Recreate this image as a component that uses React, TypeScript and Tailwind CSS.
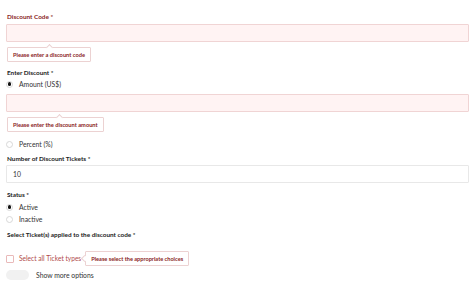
import React from "react";

const maroon = "text-[#8a2424]";

function Tip({ text, arrowLeft }: { text: string; arrowLeft: number }) {
  return (
    <div className="relative flex border border-[#ecd2d2] bg-white px-[5px] h-[15px] items-center rounded-[1px]">
      <span
        className="absolute top-[-3px] w-[5px] h-[5px] rotate-45 bg-white border-l border-t border-[#ecd2d2]"
        style={{ left: arrowLeft }}
      />
      <span className={`text-[5.7px] font-bold ${maroon} leading-none`}>{text}</span>
    </div>
  );
}

function Radio({ checked, label }: { checked?: boolean; label: string }) {
  return (
    <div className="flex items-center h-[12px]">
      <span className="w-[7px] h-[7px] rounded-full border border-[#d8d8d8] bg-white flex items-center justify-center">
        {checked && <span className="w-[3.5px] h-[3.5px] rounded-full bg-[#111]" />}
      </span>
      <span className="ml-[6px] text-[6.8px] text-[#333] leading-none">{label}</span>
    </div>
  );
}

function Label({ children, red }: { children: React.ReactNode; red?: boolean }) {
  return (
    <div className={`flex items-center h-[8px] ml-[1px] text-[6.4px] font-bold leading-none ${red ? maroon : "text-[#222]"}`}>
      {children}
    </div>
  );
}

export default function App() {
  return (
    <div
      className="w-[474px] h-[287px] bg-white pl-[6px] pr-[5px] pt-[13px] overflow-hidden flex flex-col"
      style={{ fontFamily: "Lato, 'Open Sans', sans-serif" }}
    >
      <Label red>Discount Code *</Label>
      <div className="mt-[3px] h-[18px] shrink-0 border border-[#f0d4d4] bg-[#fff3f3] rounded-[1px]" />
      <div className="mt-[5px] ml-[1px] flex">
        <Tip text="Please enter a discount code" arrowLeft={39} />
      </div>

      <div className="mt-[7px]">
        <Label>Enter Discount *</Label>
      </div>
      <div className="mt-[1px]">
        <Radio checked label="Amount (US$)" />
      </div>
      <div className="mt-[4px] h-[18px] shrink-0 border border-[#f0d4d4] bg-[#fff3f3] rounded-[1px]" />
      <div className="mt-[5px] ml-[1px] flex">
        <Tip text="Please enter the discount amount" arrowLeft={49} />
      </div>
      <div className="mt-[6px]">
        <Radio label="Percent (%)" />
      </div>

      <div className="mt-[5px]">
        <Label>Number of Discount Tickets *</Label>
      </div>
      <div className="mt-[2px] h-[18px] shrink-0 border border-[#e8e8e8] bg-white rounded-[1px] flex items-center pl-[6px]">
        <span className="text-[6.8px] text-[#333] leading-none">10</span>
      </div>

      <div className="mt-[8px]">
        <Label>Status *</Label>
      </div>
      <div className="mt-[2px]">
        <Radio checked label="Active" />
        <Radio label="Inactive" />
      </div>

      <div className="mt-[6px]">
        <Label>Select Ticket(s) applied to the discount code *</Label>
      </div>

      <div className="mt-[12px] flex items-center h-[15px]">
        <span className="w-[8px] h-[8px] border border-[#e9b9b9] bg-white rounded-[1px]" />
        <span className="ml-[5px] text-[6.6px] text-[#b04a4a] leading-none">Select all Ticket types</span>
        <div className="ml-[4px] relative">
          <span className="absolute left-[-3px] top-[5px] w-[5px] h-[5px] rotate-45 bg-white border-l border-b border-[#ecd2d2]" />
          <div className="border border-[#ecd2d2] bg-white px-[5px] h-[15px] flex items-center rounded-[1px]">
            <span className={`text-[5.6px] font-bold ${maroon} leading-none`}>Please select the appropriate choices</span>
          </div>
        </div>
      </div>

      <div className="mt-[4px] flex items-center h-[10px]">
        <span className="w-[23px] h-[10px] rounded-full bg-[#f1f1f1]" />
        <span className="ml-[7px] text-[6.8px] text-[#333] leading-none">Show more options</span>
      </div>
    </div>
  );
}
